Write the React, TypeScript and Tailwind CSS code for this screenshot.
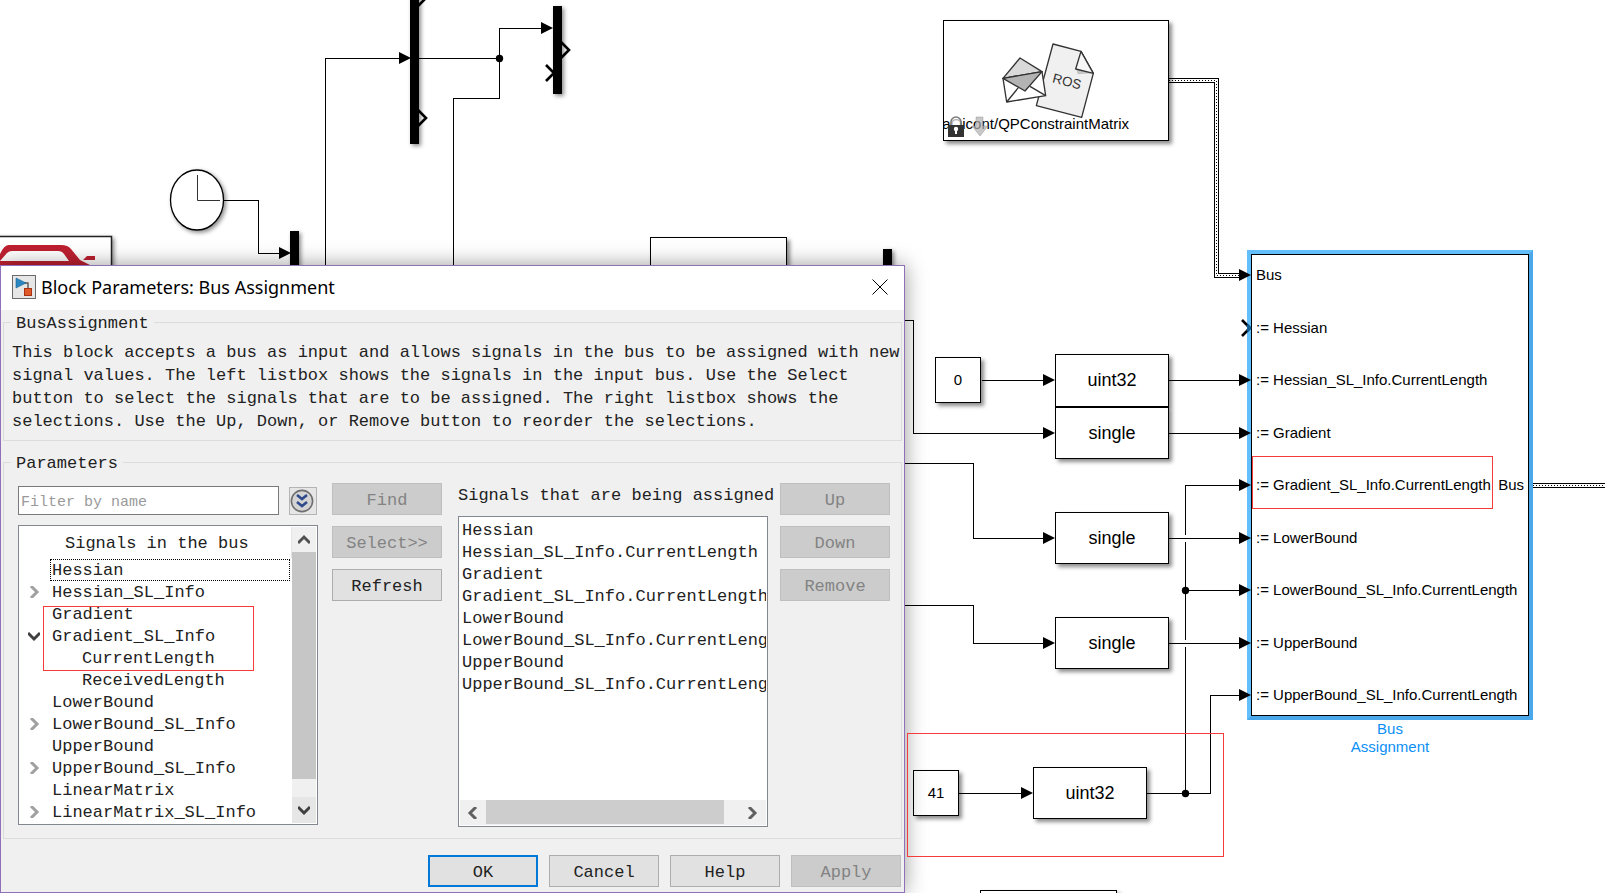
import React, { useState } from 'react';

interface TreeItem {
  name: string;
  child?: boolean;
  state?: 'open' | 'closed';
}

interface BlockProps {
  label: string;
  className: string;
}

const signals: TreeItem[] = [
  { name: 'Hessian' },
  { name: 'Hessian_SL_Info', state: 'closed' },
  { name: 'Gradient' },
  { name: 'Gradient_SL_Info', state: 'open' },
  { name: 'CurrentLength', child: true },
  { name: 'ReceivedLength', child: true },
  { name: 'LowerBound' },
  { name: 'LowerBound_SL_Info', state: 'closed' },
  { name: 'UpperBound' },
  { name: 'UpperBound_SL_Info', state: 'closed' },
  { name: 'LinearMatrix' },
  { name: 'LinearMatrix_SL_Info', state: 'closed' },
];

const assigned = [
  'Hessian',
  'Hessian_SL_Info.CurrentLength',
  'Gradient',
  'Gradient_SL_Info.CurrentLength',
  'LowerBound',
  'LowerBound_SL_Info.CurrentLength',
  'UpperBound',
  'UpperBound_SL_Info.CurrentLength',
];

const blockShadow = 'shadow-[3px_3px_4px_rgba(0,0,0,0.45)]';

function Block({ label, className }: BlockProps) {
  return (
    <div
      className={`absolute flex items-center justify-center border border-black bg-white ${blockShadow} ${className}`}
    >
      {label}
    </div>
  );
}

// Arrow head with its tip at x, y
function Arrow({ x, y }: { x: number; y: number }) {
  return <path d={`M${x} ${y}l-12 -6v12z`} fill="#000" />;
}

function BusWire({ d }: { d: string }) {
  return (
    <g fill="none">
      <path d={d} stroke="#000" strokeWidth="5" />
      <path d={d} stroke="#fff" strokeWidth="3" />
      <path d={d} stroke="#000" strokeWidth="1" strokeDasharray="1 2" />
    </g>
  );
}

function Wires() {
  return (
    <svg className="absolute inset-0 h-full w-full" aria-hidden="true">
      <defs>
        <filter id="drop" x="-50%" y="-20%" width="220%" height="150%">
          <feDropShadow dx="2" dy="2" stdDeviation="2" floodOpacity="0.45" />
        </filter>
      </defs>

      {/* vehicle block */}
      <rect x="-20.5" y="236.5" width="132" height="90" fill="#fff" stroke="#222" strokeWidth="1.5" filter="url(#drop)" />
      <path d="M-6 268L0 254Q4 245 9 245H61Q68 245 71 249L80 260L90 265V270H-6Z" fill="#be2030" />
      <path d="M0 261L7 253Q9 251 12 251H58Q62 251 64 254L69 261Z" fill="#fff" />
      <path d="M87 256H95V260H83Z" fill="#be2030" />

      {/* clock */}
      <ellipse cx="197" cy="200" rx="26.5" ry="30" fill="#fff" stroke="#000" strokeWidth="1.3" filter="url(#drop)" />
      <path d="M197.5 175V200.5H220" fill="none" stroke="#333" />

      <g fill="none" stroke="#000" shapeRendering="crispEdges">
        <path d="M224 200.5H258.5V253.5H282" />
        <path d="M325.5 266V58.5H400" />
        <path d="M419 58.5H499.5" />
        <path d="M545 28.5H499.5V98.5H453.5V266" />
        <path d="M905 320.5H913.5V433.5H1046" />
        <path d="M905 463.5H973.5V538.5H1046" />
        <path d="M905 605.5H973.5V643.5H1046" />
        <path d="M982 380.5H1046M1169 380.5H1240" />
        <path d="M1169 433.5H1240" />
        <path d="M1169 538.5H1240M1169 643.5H1240" />
        <path d="M959 793.5H1024M1147 793.5H1210.5V695.5H1240" />
        <path d="M1185.5 793V647M1185.5 640V542M1185.5 535V485.5H1240" />
        <path d="M1185.5 590.5H1240" />
      </g>

      <circle cx="499.5" cy="58.5" r="3.7" />
      <circle cx="1185.5" cy="590.5" r="3.7" />
      <circle cx="1185.5" cy="793.5" r="3.7" />

      <Arrow x={411} y={58} />
      <Arrow x={553} y={28} />
      <Arrow x={291} y={253} />
      <Arrow x={1055} y={380} />
      <Arrow x={1055} y={433} />
      <Arrow x={1055} y={538} />
      <Arrow x={1055} y={643} />
      <Arrow x={1033} y={793} />

      {/* mux and demux bars */}
      <g filter="url(#drop)">
        <rect x="410" y="-10" width="9" height="154" />
        <rect x="553" y="6" width="9" height="88" />
        <rect x="290" y="231" width="9" height="60" />
        <rect x="883" y="249" width="9" height="40" />
      </g>
      <g fill="none" stroke="#000" strokeWidth="2.6">
        <path d="M418 -11L426 -2L418 6" />
        <path d="M418 110L426 118L418 126" />
        <path d="M561 42L569 50L561 58" />
        <path d="M546 65L554 73L546 81" />
      </g>

      <BusWire d="M1169 80.5H1216.5V275.5H1242" />
      <BusWire d="M1530 485.5H4000" />
    </svg>
  );
}

function RosBlock() {
  return (
    <div className={`absolute left-[943px] top-[20px] h-[121px] w-[226px] overflow-hidden border border-black bg-white ${blockShadow}`}>
      <svg className="absolute left-[56px] top-[21px] h-[77px] w-[96px]" viewBox="300 125 288 231" aria-hidden="true">
        <g stroke="#333" strokeWidth="4" strokeLinejoin="round">
          <path d="M459 131L543 153L580 219L545 351L409 316Z" fill="#f0f0f0" />
          <path d="M530 208L576 219L533 222Z" fill="#c4c4c4" stroke="none" />
          <path d="M543 153L527 206L580 219Z" fill="#f7f7f7" />
          <path d="M309 234L426 214L437 286L320 305Z" fill="#fff" />
          <path d="M320 305L355 262M437 286L390 258" fill="none" />
          <path d="M309 234L360 173L426 214Z" fill="#d9d9d9" />
          <path d="M309 234L426 214L375 272Z" fill="#b3b3b3" />
        </g>
        <text x="501" y="257" fontSize="40" textAnchor="middle" fill="#333" transform="rotate(14 501 243)">
          ROS
        </text>
      </svg>
      <span className="absolute bottom-[5px] right-[39px] whitespace-nowrap text-[15px] leading-[22px]">
        aQicont/QPConstraintMatrix
      </span>
      <svg className="absolute bottom-[2px] left-[3px] h-[22px] w-[44px]" viewBox="0 0 44 22" aria-hidden="true">
        <path d="M4 9V6A5 5 0 0 1 14 6V9Z" fill="#fff" fillOpacity="0.7" />
        <path d="M4 9V6A5 5 0 0 1 14 6V9" fill="none" stroke="#7a7a7a" strokeWidth="1.6" />
        <rect x="1" y="9" width="16" height="12" fill="#333" />
        <circle cx="9" cy="13" r="2.2" fill="#fff" />
        <path d="M8 14H10V18H8Z" fill="#fff" />
        <path d="M29 1H36V10H41L33 20L25 10H29Z" fill="#b0b0b0" fillOpacity="0.7" stroke="#8a8a8a" strokeOpacity="0.4" />
      </svg>
    </div>
  );
}

const ports = [
  'Bus',
  ':= Hessian',
  ':= Hessian_SL_Info.CurrentLength',
  ':= Gradient',
  ':= Gradient_SL_Info.CurrentLength',
  ':= LowerBound',
  ':= LowerBound_SL_Info.CurrentLength',
  ':= UpperBound',
  ':= UpperBound_SL_Info.CurrentLength',
];

function BusAssignmentBlock() {
  return (
    <div className="absolute left-[1247px] top-[250px] w-[286px]">
      <div className="border-4 border-b-[#4aa8ea] border-l-[#62bffb] border-r-[#4aa8ea] border-t-[#62bffb]">
        {/* inputs and the output share one cell, the long input names run under it */}
        <div className="grid h-[462px] grid-cols-1 grid-rows-1 border border-black bg-white pl-1 pr-1 text-[15px] leading-[22px]">
          <ul className="col-start-1 row-start-1 flex flex-col justify-between py-[9px]">
            {ports.map((port) => (
              <li key={port} className="whitespace-nowrap">{port}</li>
            ))}
          </ul>
          <span className="col-start-1 row-start-1 self-center justify-self-end">Bus</span>
        </div>
      </div>
      <div className="text-center text-[15px] leading-[18px] text-[#0b8ff5]">
        Bus
        <br />
        Assignment
      </div>
    </div>
  );
}

function PortArrows() {
  const rows = [275, 380, 433, 485, 538, 590, 643, 695];
  return (
    <svg className="absolute left-[1235px] top-0 h-[893px] w-[20px]" aria-hidden="true">
      {rows.map((y) => (
        <Arrow key={y} x={16} y={y} />
      ))}
      <path d="M7 320L15 328L7 336" fill="none" stroke="#000" strokeWidth="2.6" />
      <path d="M12 325L15 328L12 331" fill="none" stroke="#0d5c94" strokeWidth="2.6" />
    </svg>
  );
}

function Chevron({ className, d }: { className: string; d: string }) {
  return (
    <svg className={className} viewBox="0 0 12 12" fill="none" stroke="currentColor" strokeWidth="3" aria-hidden="true">
      <path d={d} />
    </svg>
  );
}

const right = 'M3 0L9 6L3 12';
const left = 'M9 0L3 6L9 12';
const down = 'M0 3L6 9L12 3';
const up = 'M0 9L6 3L12 9';

function DialogButton({ label, disabled, primary }: { label: string; disabled?: boolean; primary?: boolean }) {
  const look = primary
    ? 'border-2 border-[#0078d7] bg-[#e1e1e1]'
    : disabled
      ? 'border border-[#bfbfbf] bg-[#cccccc] text-[#838383]'
      : 'border border-[#adadad] bg-[#e1e1e1]';
  return (
    <button type="button" disabled={disabled} className={`h-8 w-[110px] shrink-0 pt-[3px] ${look}`}>
      {label}
    </button>
  );
}

function SignalTree() {
  return (
    <div className="flex h-[300px] border border-[#828790] bg-white p-px">
      <div className="min-w-0 flex-1 overflow-hidden">
        <div className="h-[31px] border-r border-[#e5e5e5] pl-[45px] leading-[33px]">Signals in the bus</div>
        <ul role="tree" aria-label="Signals in the bus" className="pt-px">
          {signals.map((item, i) => (
            <li key={item.name} role="treeitem" className="flex h-[22px] items-center leading-6">
              <span className="flex w-7 shrink-0 justify-center">
                {item.state && (
                  <button
                    type="button"
                    aria-label={`Toggle ${item.name}`}
                    className={item.state === 'open' ? 'text-[#404040]' : 'text-[#a0a0a0]'}
                  >
                    <Chevron className="size-3" d={item.state === 'open' ? down : right} />
                  </button>
                )}
              </span>
              <span
                className={
                  i === 0
                    ? 'ml-[2px] h-full w-[240px] border border-dotted border-black pl-px leading-[22px]'
                    : item.child
                      ? 'h-[22px] pl-[34px]'
                      : 'h-[22px] pl-1'
                }
              >
                {item.name}
              </span>
            </li>
          ))}
        </ul>
      </div>
      <div className="flex w-6 flex-col bg-[#f0f0f0] text-[#505050]">
        <button type="button" aria-label="Scroll up" className="flex h-[25px] items-center justify-center">
          <Chevron className="size-3" d={up} />
        </button>
        <div className="h-[227px] bg-[#c6c6c6]" />
        <button type="button" aria-label="Scroll down" className="mt-auto flex h-[26px] items-center justify-center bg-[#e6e6e6] text-[#404040]">
          <Chevron className="size-3" d={down} />
        </button>
      </div>
    </div>
  );
}

function AssignedList() {
  return (
    <div className="flex h-[311px] flex-col border border-[#828790] bg-white p-px">
      <ul aria-labelledby="assigned-label" className="flex-1 overflow-hidden pl-[2px] pt-[2px] leading-[22px]">
        {assigned.map((name) => (
          <li key={name} className="whitespace-nowrap">{name}</li>
        ))}
      </ul>
      <div className="flex h-[25px] bg-[#f0f0f0] text-[#606060]">
        <button type="button" aria-label="Scroll left" className="flex w-[26px] items-center justify-center">
          <Chevron className="size-3" d={left} />
        </button>
        <div className="h-6 w-[238px] bg-[#cdcdcd]" />
        <button type="button" aria-label="Scroll right" className="ml-auto flex w-7 items-center justify-center">
          <Chevron className="size-3" d={right} />
        </button>
      </div>
    </div>
  );
}

function ParametersDialog() {
  const [filter, setFilter] = useState('');

  return (
    <section
      role="dialog"
      aria-labelledby="dialog-title"
      className="absolute left-0 top-[265px] w-[905px] border border-[#9070b8] bg-[#f0f0f0] font-['Liberation_Mono',monospace] text-[17px] text-[#222] shadow-[0_0_20px_rgba(0,0,0,0.4)]"
    >
      <header className="flex h-11 items-center bg-white pb-[2px] pl-[11px] pr-4">
        <svg className="size-6 shrink-0" viewBox="0 0 24 24" aria-hidden="true">
          <rect x="0.5" y="0.5" width="23" height="23" fill="#e6e6e6" stroke="#6b6b6b" />
          <path d="M12 8H16V14" fill="none" stroke="#555" strokeWidth="1.4" />
          <path d="M4 3L14 8L4 13Z" fill="#2a86c0" stroke="#1c6496" strokeWidth="0.6" />
          <rect x="12.5" y="13.5" width="7" height="7" fill="#e0592a" stroke="#a83212" />
        </svg>
        <h1 id="dialog-title" className="ml-[5px] font-['Noto_Sans','Open_Sans',sans-serif] text-[18px] text-black">
          Block Parameters: Bus Assignment
        </h1>
        <button type="button" aria-label="Close" className="ml-auto">
          <svg className="size-4" viewBox="0 0 16 16" stroke="#000" aria-hidden="true">
            <path d="M0.5 0.5L15.5 15.5M15.5 0.5L0.5 15.5" />
          </svg>
        </button>
      </header>

      <fieldset className="mx-[2px] border border-[#dcdcdc] pb-[7px] pl-2">
        <legend className="ml-[-1px] px-[5px] pt-1 leading-5">BusAssignment</legend>
        <p className="mt-[7px] whitespace-nowrap leading-[23px]">
          This block accepts a bus as input and allows signals in the bus to be assigned with new
          <br />
          signal values. The left listbox shows the signals in the input bus. Use the Select
          <br />
          button to select the signals that are to be assigned. The right listbox shows the
          <br />
          selections. Use the Up, Down, or Remove button to reorder the selections.
        </p>
      </fieldset>

      <fieldset className="mx-[2px] mt-[9px] border border-[#dcdcdc] pb-[11px] pl-[14px] pr-[11px]">
        <legend className="ml-[-7px] px-[5px] pt-1 leading-5">Parameters</legend>
        <div className="flex pt-[9px]">
          <div className="w-[300px] pt-[3px]">
            <div className="mb-[10px] flex gap-[10px]">
              <input
                type="text"
                aria-label="Filter by name"
                placeholder="Filter by name"
                value={filter}
                onChange={(e) => setFilter(e.target.value)}
                className="h-[29px] w-[261px] border border-[#7a7a7a] bg-white px-[2px] pt-[3px] text-[15px] placeholder:text-[#9a9a9a]"
              />
              <button type="button" aria-label="Filter options" className="size-7 self-end border border-[#b4b4b4] bg-[#e6e6e6]">
                <svg className="size-6" viewBox="0 0 24 24" aria-hidden="true">
                  <circle cx="12" cy="12" r="10.6" fill="#d4d4d4" stroke="#6e6e6e" strokeWidth="1.6" />
                  <path d="M7 6L12 10L17 6M7 13L12 17L17 13" fill="none" stroke="#2f4a8a" strokeWidth="2.6" />
                </svg>
              </button>
            </div>
            <SignalTree />
          </div>

          <div className="ml-[14px] flex flex-col gap-[11px]">
            <DialogButton label="Find" disabled />
            <DialogButton label="Select>>" disabled />
            <DialogButton label="Refresh" />
          </div>

          <div className="ml-4 w-[310px]">
            <div id="assigned-label" className="mb-2 whitespace-nowrap pt-px leading-6">Signals that are being assigned</div>
            <AssignedList />
          </div>

          <div className="ml-3 flex flex-col gap-[11px]">
            <DialogButton label="Up" disabled />
            <DialogButton label="Down" disabled />
            <DialogButton label="Remove" disabled />
          </div>
        </div>
      </fieldset>

      <footer className="flex justify-end gap-[11px] pb-[5px] pr-[3px] pt-4">
        <DialogButton label="OK" primary />
        <DialogButton label="Cancel" />
        <DialogButton label="Help" />
        <DialogButton label="Apply" disabled />
      </footer>
    </section>
  );
}

export default function App() {
  return (
    <main className="relative h-screen w-full overflow-hidden bg-white font-['Liberation_Sans',Arial,sans-serif] text-black">
      <Wires />

      <RosBlock />
      <Block label="0" className="left-[935px] top-[357px] size-[46px] text-[15px]" />
      <Block label="uint32" className="left-[1055px] top-[354px] h-[53px] w-[114px] text-[18px]" />
      <Block label="single" className="left-[1055px] top-[407px] h-[52px] w-[114px] text-[18px]" />
      <Block label="single" className="left-[1055px] top-[512px] h-[52px] w-[114px] text-[18px]" />
      <Block label="single" className="left-[1055px] top-[617px] h-[52px] w-[114px] text-[18px]" />
      <Block label="41" className="left-[913px] top-[770px] size-[46px] text-[15px]" />
      <Block label="uint32" className="left-[1033px] top-[767px] h-[52px] w-[114px] text-[18px]" />
      <Block label="" className="left-[650px] top-[237px] h-[60px] w-[137px]" />
      <Block label="" className="left-[980px] top-[890px] h-[60px] w-[137px]" />
      <BusAssignmentBlock />
      <PortArrows />

      <ParametersDialog />

      {/* highlight frames */}
      <div className="pointer-events-none absolute left-[43px] top-[606px] h-[65px] w-[211px] border border-[#f63b3b]" />
      <div className="pointer-events-none absolute left-[1252px] top-[456px] h-[53px] w-[241px] border border-[#f63b3b]" />
      <div className="pointer-events-none absolute left-[907px] top-[733px] h-[124px] w-[317px] border border-[#f63b3b]" />
    </main>
  );
}
